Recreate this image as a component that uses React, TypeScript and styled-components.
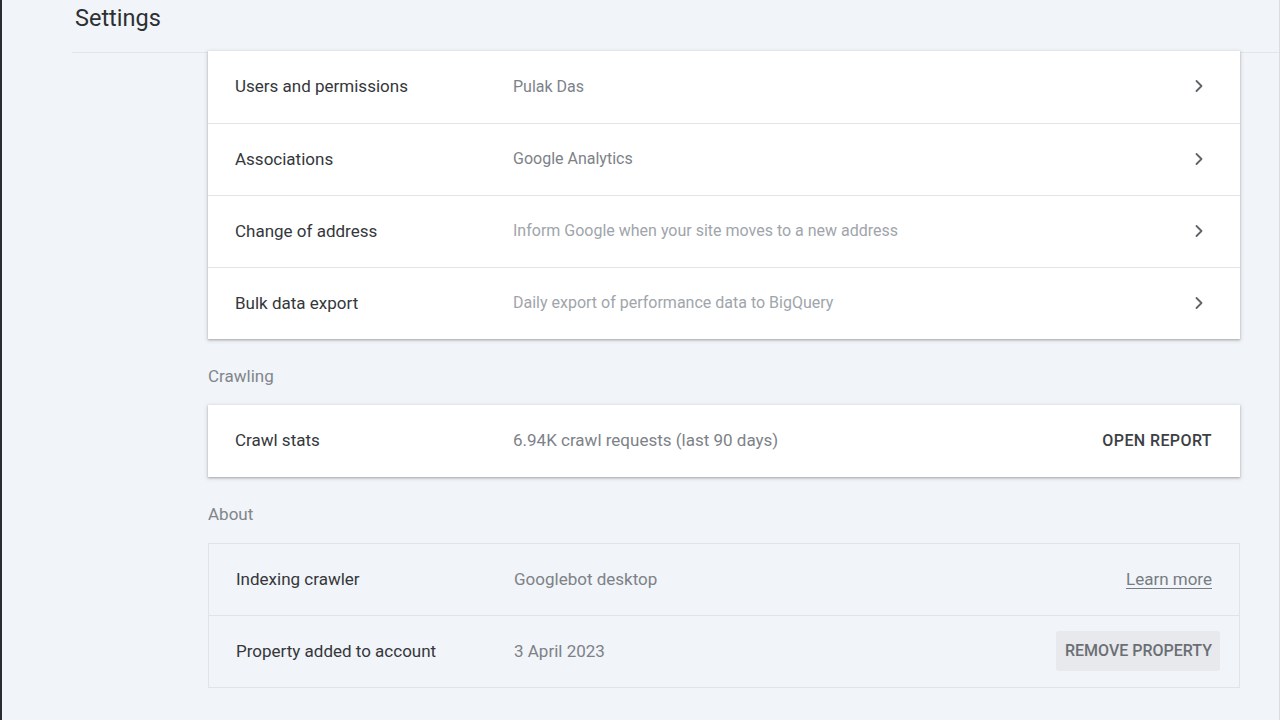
import React from "react";
import styled, { createGlobalStyle } from "styled-components";

const Global = createGlobalStyle`
  html, body { margin: 0; padding: 0; background: #f1f4f8; }
  body { font-family: Roboto, "Noto Sans", "Liberation Sans", sans-serif; -webkit-font-smoothing: antialiased; }
  * { box-sizing: border-box; }
`;

const Page = styled.div`
  width: 1280px;
  height: 720px;
  overflow: hidden;
  background: #f1f4f8;
  border-left: 2px solid #2b2d30;
  border-right: 1px solid #d9dde2;
`;

const Header = styled.header`
  height: 53px;
  margin-left: 70px;
  padding: 4px 0 0 3px;
  border-bottom: 1px solid #e2e6ea;
  font-size: 23.5px;
  color: #2d3033;
  line-height: 28px;
`;

const Content = styled.main`
  margin-left: 206px;
  width: 1032px;
  margin-top: -2px;
`;

const Card = styled.section<{ $flat?: boolean }>`
  background: ${(p) => (p.$flat ? "#f1f4f8" : "#ffffff")};
  border: ${(p) => (p.$flat ? "1px solid #e0e3e7" : "none")};
  box-shadow: ${(p) =>
    p.$flat ? "none" : "0 1px 2px rgba(60,64,67,0.35), 0 1px 4px 1px rgba(60,64,67,0.12)"};
`;

const Row = styled.div<{ $flat?: boolean }>`
  display: flex;
  align-items: center;
  height: ${(p) => (p.$flat ? "71px" : "72px")};
  padding: 0 0 2px 27px;
  & + & {
    height: 72px;
    border-top: 1px solid ${(p) => (p.$flat ? "#e0e3e7" : "#eceef1")};
  }
`;

const Label = styled.div`
  width: 278px;
  flex: none;
  font-size: 17px;
  color: #34373b;
`;

const Value = styled.div<{ $tone?: "mid" | "light"; $size?: number }>`
  flex: 1;
  font-size: ${(p) => p.$size ?? 17}px;
  color: ${(p) => (p.$tone === "light" ? "#a0a5ab" : "#7d8288")};
`;

const Action = styled.div<{ $pad?: number }>`
  flex: none;
  display: flex;
  align-items: center;
  padding-right: ${(p) => p.$pad ?? 28}px;
`;

const TextButton = styled.span`
  font-size: 16px;
  font-weight: 500;
  letter-spacing: 0.4px;
  color: #3c4043;
`;

const GreyButton = styled.span`
  display: inline-flex;
  align-items: center;
  height: 40px;
  padding: 0 8px 0 9px;
  background: #e7e9ec;
  border-radius: 3px;
  font-size: 16px;
  font-weight: 500;
  letter-spacing: 0;
  color: #6b6f74;
`;

const LinkText = styled.span`
  font-size: 17px;
  color: #777c82;
  text-decoration: underline;
  text-underline-offset: 3px;
`;

const SectionTitle = styled.div`
  margin: 25px 0 17px 0;
  height: 24px;
  line-height: 24px;
  font-size: 17px;
  color: #80868b;
`;

const Chevron = () => (
  <svg width="24" height="24" viewBox="0 0 24 24" fill="none">
    <path d="M9.5 7l5 5-5 5" stroke="#5f6368" strokeWidth="1.8" strokeLinecap="round" strokeLinejoin="round" />
  </svg>
);

const topRows = [
  { label: "Users and permissions", value: "Pulak Das", tone: "mid" as const },
  { label: "Associations", value: "Google Analytics", tone: "mid" as const },
  { label: "Change of address", value: "Inform Google when your site moves to a new address", tone: "light" as const },
  { label: "Bulk data export", value: "Daily export of performance data to BigQuery", tone: "light" as const },
];

export default function App() {
  return (
    <>
      <Global />
      <Page>
        <Header>Settings</Header>
        <Content>
          <Card>
            {topRows.map((r) => (
              <Row key={r.label}>
                <Label>{r.label}</Label>
                <Value $tone={r.tone} $size={16}>{r.value}</Value>
                <Action $pad={29}>
                  <Chevron />
                </Action>
              </Row>
            ))}
          </Card>

          <SectionTitle>Crawling</SectionTitle>
          <Card>
            <Row>
              <Label>Crawl stats</Label>
              <Value>6.94K crawl requests (last 90 days)</Value>
              <Action>
                <TextButton>OPEN REPORT</TextButton>
              </Action>
            </Row>
          </Card>

          <SectionTitle>About</SectionTitle>
          <Card $flat>
            <Row $flat>
              <Label>Indexing crawler</Label>
              <Value>Googlebot desktop</Value>
              <Action $pad={27}>
                <LinkText>Learn more</LinkText>
              </Action>
            </Row>
            <Row $flat>
              <Label>Property added to account</Label>
              <Value>3 April 2023</Value>
              <Action $pad={19}>
                <GreyButton>REMOVE PROPERTY</GreyButton>
              </Action>
            </Row>
          </Card>
        </Content>
      </Page>
    </>
  );
}
